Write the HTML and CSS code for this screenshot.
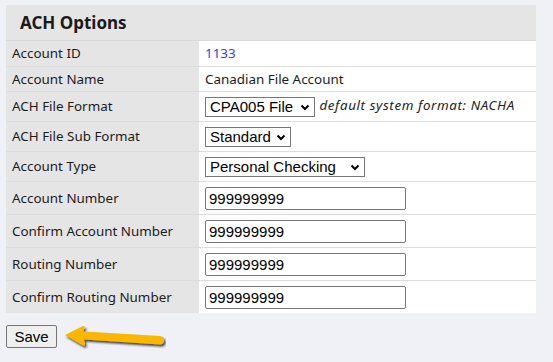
FILE: index.html
```html
<!DOCTYPE html>
<html>
<head>
<meta charset="utf-8">
<link rel="stylesheet" href="styles.css">
</head>
<body>
<div class="panel">
  <div class="panel-head">ACH Options</div>
  <table class="opts">
    <tr><td class="lbl">Account ID</td><td class="val"><span class="id">1133</span></td></tr>
    <tr><td class="lbl">Account Name</td><td class="val">Canadian File Account</td></tr>
    <tr class="sel-row"><td class="lbl">ACH File Format</td><td class="val"><span class="selwrap"><select class="sel sel-fmt"><option>CPA005 File</option></select><svg class="chev" width="10" height="7" viewBox="0 0 10 7"><path d="M1.5 1.5 L5 5 L8.5 1.5" fill="none" stroke="#000" stroke-width="2"/></svg></span> <span class="note">default system format: NACHA</span></td></tr>
    <tr class="sel-row"><td class="lbl">ACH File Sub Format</td><td class="val"><span class="selwrap"><select class="sel sel-sub"><option>Standard</option></select><svg class="chev" width="10" height="7" viewBox="0 0 10 7"><path d="M1.5 1.5 L5 5 L8.5 1.5" fill="none" stroke="#000" stroke-width="2"/></svg></span></td></tr>
    <tr class="sel-row"><td class="lbl">Account Type</td><td class="val"><span class="selwrap"><select class="sel sel-type"><option>Personal Checking</option></select><svg class="chev" width="10" height="7" viewBox="0 0 10 7"><path d="M1.5 1.5 L5 5 L8.5 1.5" fill="none" stroke="#000" stroke-width="2"/></svg></span></td></tr>
    <tr class="in-row"><td class="lbl">Account Number</td><td class="val"><input class="txt" type="text" value="999999999"></td></tr>
    <tr class="in-row"><td class="lbl">Confirm Account Number</td><td class="val"><input class="txt" type="text" value="999999999"></td></tr>
    <tr class="in-row"><td class="lbl">Routing Number</td><td class="val"><input class="txt" type="text" value="999999999"></td></tr>
    <tr class="in-row"><td class="lbl">Confirm Routing Number</td><td class="val"><input class="txt" type="text" value="999999999"></td></tr>
  </table>
</div>
<div class="actions">
  <button class="save">Save</button>
  <svg class="arrow" width="106" height="28" viewBox="0 0 106 28">
    <defs>
      <filter id="sh" x="-10%" y="-30%" width="130%" height="180%">
        <feDropShadow dx="1.5" dy="2" stdDeviation="1" flood-color="#1a1a1a" flood-opacity="0.85"/>
      </filter>
    </defs>
    <path d="M5 11 L23 2 Q25 1.5 24.5 4 L23.5 7.5 L100 12 Q104 12.5 104 16.5 Q104 20.5 100 20.5 L24 15.5 L25 19.5 Q25.5 22.5 23 21.5 Z" fill="#fbb602" filter="url(#sh)"/>
  </svg>
</div>
</body>
</html>
```
FILE: styles.css
```css
html, body {
  margin: 0;
  padding: 0;
  background: #f0f1f6;
}
body {
  padding: 5px 0 0 6px;
  font-family: "Noto Sans", "Open Sans", sans-serif;
  color: #1c1c1c;
  font-size: 13.4px;
}
.panel {
  width: 530px;
  background: #e5e5e5;
}
.panel-head {
  height: 36px;
  box-sizing: border-box;
  padding: 6px 0 0 14px;
  font-size: 17px;
  font-weight: bold;
  color: #1a1a1a;
  border-bottom: 1px solid #d9d9d9;
  line-height: 24px;
}
.opts {
  width: 100%;
  border-collapse: collapse;
  border-spacing: 0;
}
.opts td {
  border-top: 1px solid #dcdcdc;
  padding: 0 6px;
  height: 24px;
  line-height: 15px;
}
.opts tr:first-child td {
  border-top: none;
  height: 25px;
}
.opts .lbl {
  width: 181px;
  background: #e5e5e5;
}
.opts .val {
  background: #fff;
}
.opts .sel-row td { height: 29px; }
.opts .in-row td { height: 32px; }
.id { color: #3c3ce0; }
.note {
  font-style: italic;
  color: #222;
  margin-left: 1px;
  letter-spacing: 0.6px;
}
.selwrap {
  position: relative;
  display: inline-block;
  vertical-align: middle;
}
.sel {
  -webkit-appearance: none;
  appearance: none;
  display: block;
  font-family: "Liberation Sans", Arial, sans-serif;
  font-size: 15px;
  height: 20px;
  line-height: 18px;
  box-sizing: border-box;
  border: 1px solid #767676;
  border-radius: 0;
  background: #fff;
  color: #000;
  padding: 0 0 0 4px;
  margin: 0;
}
.chev {
  position: absolute;
  right: 5px;
  top: 7px;
  pointer-events: none;
}
.sel-fmt { width: 110px; }
.sel-sub { width: 86px; }
.sel-type { width: 160px; }
.txt {
  font-family: "Liberation Sans", Arial, sans-serif;
  font-size: 15px;
  width: 201px;
  height: 23px;
  box-sizing: border-box;
  border: 1px solid #767676;
  border-radius: 2px;
  padding: 0 3px;
  margin: 0;
  color: #000;
  vertical-align: middle;
}
.actions {
  display: flex;
  align-items: flex-start;
  margin-top: 12px;
}
.save {
  font-family: "Liberation Sans", Arial, sans-serif;
  font-size: 15px;
  width: 51px;
  height: 23px;
  padding: 0;
  border: 1px solid #767676;
  border-radius: 2px;
  background: #efefef;
  color: #000;
}
.arrow {
  margin-left: 3px;
  margin-top: -1px;
}
```
